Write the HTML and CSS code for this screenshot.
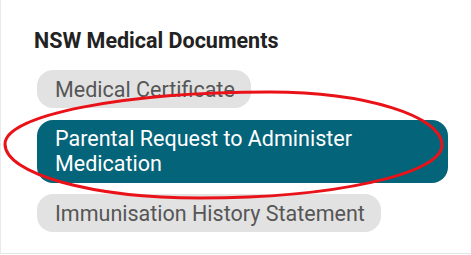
FILE: index.html
```html
<!DOCTYPE html>
<html>
<head>
<meta charset="utf-8">
<link rel="stylesheet" href="styles.css">
</head>
<body>
<div class="card">
  <h2 class="title">NSW Medical Documents</h2>
  <div class="chips">
    <span class="chip">Medical Certificate</span>
    <span class="chip chip-active">Parental Request to Administer Medication</span>
    <span class="chip">Immunisation History Statement</span>
  </div>
</div>
<svg class="annot" width="471" height="255" viewBox="0 0 471 255">
  <path d="M5 144 C5 115 124 92 270 92 C365 92 442 116 442 145 C442 174 334 198 200 198 C92 198 5 174 5 144 Z" fill="none" stroke="#ea1219" stroke-width="3"/>
</svg>
</body>
</html>
```
FILE: styles.css
```css
html, body {
  margin: 0;
  padding: 0;
  background: #fff;
}
body {
  font-family: Roboto, "Liberation Sans", Arial, sans-serif;
  width: 471px;
  height: 255px;
  overflow: hidden;
  position: relative;
}
.card {
  box-sizing: border-box;
  width: 471px;
  height: 254px;
  border-left: 1px solid #e9e9e9;
  border-bottom: 1px solid #e6e6e6;
  padding: 29px 0 0 33px;
}
.title {
  margin: 0;
  font-size: 21.5px;
  line-height: 24px;
  font-weight: 700;
  color: #222;
}
.chips {
  margin: 17px 0 0 3px;
  width: 411px;
  display: flex;
  flex-direction: column;
  align-items: flex-start;
  gap: 11.5px;
}
.chip {
  box-sizing: border-box;
  max-width: 100%;
  background: #e2e2e2;
  color: #565656;
  font-size: 21.5px;
  line-height: 25px;
  padding: 6.5px 16px 6.5px 18px;
  border-radius: 16px;
}
.chip-active {
  background: #03647a;
  color: #fff;
}
.annot {
  position: absolute;
  left: 0;
  top: 0;
  pointer-events: none;
}
```
